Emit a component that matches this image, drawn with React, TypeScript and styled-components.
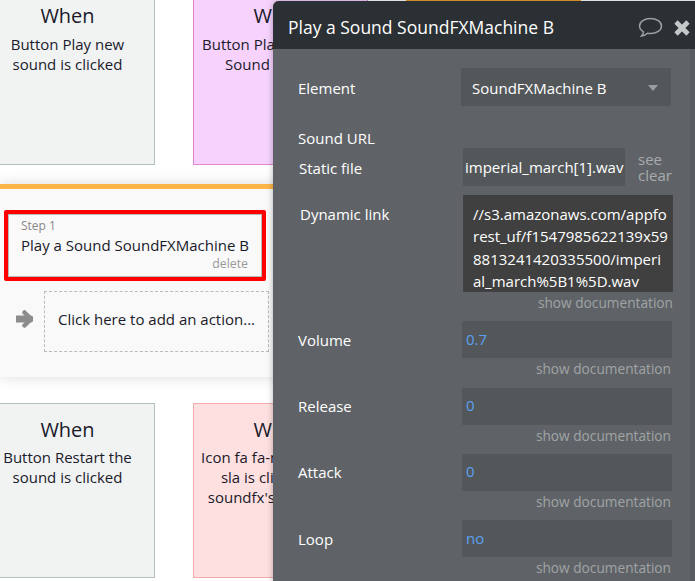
import React from 'react';
import styled, { createGlobalStyle } from 'styled-components';

const GlobalStyle = createGlobalStyle`
  html, body {
    margin: 0;
    padding: 0;
    background: #fff;
    overflow: hidden;
  }
  body {
    font-family: "Open Sans", "Noto Sans", sans-serif;
  }
`;

const Page = styled.div`
  position: relative;
  width: 695px;
  height: 581px;
  overflow: hidden;
  background: #fff;
`;

const CardRow = styled.div<{ $top: number; $height: number }>`
  display: flex;
  gap: 37px;
  margin-left: -20px;
  margin-top: ${p => p.$top}px;
  height: ${p => p.$height}px;
  align-items: flex-end;
`;

const Card = styled.div<{ $bg: string; $line: string; $pad: number }>`
  flex: none;
  width: 175px;
  height: 175px;
  box-sizing: border-box;
  background: ${p => p.$bg};
  border: 1px solid ${p => p.$line};
  padding: ${p => p.$pad}px 0 0;
  text-align: center;
  color: #1a1a2a;

  & + & {
    margin-left: 1px;
  }
`;

const CardTitle = styled.div<{ $gap: number }>`
  font-size: 20px;
  line-height: 27px;
  margin-bottom: ${p => p.$gap}px;
`;

const CardText = styled.div`
  font-size: 15px;
  line-height: 20px;
  white-space: pre-line;
`;

const Band = styled.div`
  margin-top: 19px;
  height: 193px;
  box-sizing: border-box;
  border-top: 5px solid #ffb547;
  background: #f9f9f9;
  box-shadow: 0 0 14px rgba(0, 0, 0, 0.14);
  padding: 21px 0 0 4px;
`;

const StepBox = styled.div`
  width: 262px;
  height: 71px;
  box-sizing: border-box;
  border: 4px solid #f00;
  border-radius: 2px;
  background: #f9f9f9;
  outline: 1px solid #b4bcbc;
  outline-offset: -5px;
  padding: 4px 14px 0 13px;
`;

const StepLabel = styled.div`
  font-size: 12px;
  line-height: 16px;
  color: #888;
`;

const StepName = styled.div`
  font-size: 15px;
  line-height: 20px;
  margin-top: 1px;
  color: #1a1a2a;
  white-space: nowrap;
`;

const StepDelete = styled.div`
  font-size: 12.3px;
  line-height: 16px;
  margin-top: 1px;
  color: #999;
  text-align: right;
`;

const AddRow = styled.div`
  display: flex;
  align-items: center;
  margin-top: 10px;
  margin-left: 12px;
  gap: 11px;
`;

const ArrowSlot = styled.div`
  display: flex;
  margin-top: -5px;
`;

const AddBox = styled.div`
  width: 225px;
  height: 61px;
  box-sizing: border-box;
  border: 1px dashed #bbb;
  padding: 0 0 6px 13px;
  display: flex;
  align-items: center;
  font-size: 15px;
  color: #1a1a2a;
  white-space: nowrap;
`;

const Palette = styled.div`
  position: absolute;
  left: 273px;
  top: 1px;
  width: 430px;
  height: 600px;
  border-radius: 6px 6px 0 0;
  background: #5f6367;
  box-shadow: 0 0 6px rgba(0, 0, 0, 0.3);
`;

const ScrollTrack = styled.div`
  position: absolute;
  left: 417px;
  top: 48px;
  bottom: 0;
  width: 13px;
  background: #585c60;
`;

const PaletteHeader = styled.div`
  height: 48px;
  box-sizing: border-box;
  background: #2a3033;
  border-radius: 6px 6px 0 0;
  display: flex;
  align-items: center;
  padding: 4px 0 0 15px;
  color: #fff;
  font-size: 17.5px;
`;

const HeaderTitle = styled.div`
  flex: 1;
  white-space: nowrap;
`;

const HeaderIcons = styled.div`
  display: flex;
  align-items: center;
  gap: 11px;
  width: 57px;
  margin-right: 8px;
  margin-top: 1px;
`;

const Body = styled.div`
  position: relative;
  padding: 0 0 0 25px;
  color: #fff;
  font-size: 15px;
  width: 400px;
  box-sizing: border-box;
`;

const Row = styled.div<{ $top: number; $label: number }>`
  display: grid;
  grid-template-columns: ${p => p.$label}px 210px;
  align-items: center;
  margin-top: ${p => p.$top}px;
`;

const FieldLabel = styled.div<{ $drop?: number }>`
  line-height: 20px;
  padding-top: ${p => p.$drop ?? 0}px;
`;

const SelectBox = styled.div`
  height: 38px;
  box-sizing: border-box;
  background: #53575a;
  border-radius: 1px;
  display: flex;
  align-items: center;
  justify-content: space-between;
  padding: 2px 13px 0 11px;
`;

const Caret = styled.div`
  width: 0;
  height: 0;
  border-left: 5.5px solid transparent;
  border-right: 5.5px solid transparent;
  border-top: 6px solid #9a9ea1;
`;

const Heading = styled.div`
  margin-top: 22px;
  line-height: 20px;
`;

const FileRow = styled.div`
  display: grid;
  grid-template-columns: 164px 162px auto;
  align-items: center;
  margin-left: 1px;
`;

const FileName = styled.div`
  height: 38px;
  background: #53575a;
  border-radius: 1px;
  display: flex;
  align-items: center;
  padding-left: 2px;
  white-space: nowrap;
  overflow: hidden;
`;

const FileLinks = styled.div`
  margin-left: 13px;
  font-size: 15px;
  line-height: 16px;
  color: #a8abad;
`;

const DynamicRow = styled.div`
  display: grid;
  grid-template-columns: 163px 210px;
  align-items: start;
  margin-top: 9px;
  margin-left: 2px;
`;

const DynamicLabel = styled.div`
  line-height: 20px;
  padding-top: 9px;
`;

const DynamicBox = styled.div`
  height: 97px;
  box-sizing: border-box;
  background: #404040;
  border-radius: 1px;
  padding: 8px 0 0 10px;
  line-height: 22.3px;
  overflow: hidden;
`;

const UrlLine = styled.div`
  white-space: nowrap;
`;

const Doc = styled.div<{ $width: number }>`
  width: ${p => p.$width}px;
  text-align: right;
  color: #a0a3a5;
  font-size: 13.7px;
  line-height: 20px;
  margin-top: 1px;
`;

const ValueBox = styled.div`
  height: 37px;
  box-sizing: border-box;
  background: #53575a;
  border-radius: 1px;
  display: flex;
  align-items: center;
  padding: 0 0 2px 4px;
  color: #5aa0f0;
`;

const fields = [
  { label: 'Volume', value: '0.7' },
  { label: 'Release', value: '0' },
  { label: 'Attack', value: '0' },
  { label: 'Loop', value: 'no' },
];

const urlLines = [
  '//s3.amazonaws.com/appfo',
  'rest_uf/f1547985622139x59',
  '8813241420335500/imperi',
  'al_march%5B1%5D.wav',
];

export default function App() {
  return (
    <Page>
      <GlobalStyle />
      <CardRow $top={0} $height={165}>
        <Card $bg="#f1f3f3" $line="#b4bfbf" $pad={11}>
          <CardTitle $gap={5}>When</CardTitle>
          <CardText>{'Button Play new\nsound is clicked'}</CardText>
        </Card>
        <Card $bg="#f6d2fd" $line="#de88d4" $pad={11}>
          <CardTitle $gap={5}>When</CardTitle>
          <CardText>{'Button Play Previous 1\nSound is clicked'}</CardText>
        </Card>
        <Card $bg="#f0a030" $line="#f0a030" $pad={11} />
      </CardRow>
      <Band>
        <StepBox>
          <StepLabel>Step 1</StepLabel>
          <StepName>Play a Sound SoundFXMachine B</StepName>
          <StepDelete>delete</StepDelete>
        </StepBox>
        <AddRow>
          <ArrowSlot>
            <svg width="17" height="18" viewBox="0 0 17 18">
              <path d="M0.5 9H14" stroke="#8c8c8c" strokeWidth="7" strokeLinecap="round" fill="none" />
              <path d="M8.5 2.5L15 9l-6.5 6.5" stroke="#8c8c8c" strokeWidth="4.5" strokeLinecap="round" strokeLinejoin="round" fill="none" />
            </svg>
          </ArrowSlot>
          <AddBox>Click here to add an action...</AddBox>
        </AddRow>
      </Band>
      <CardRow $top={26} $height={175}>
        <Card $bg="#f1f3f3" $line="#b4bfbf" $pad={12}>
          <CardTitle $gap={4}>When</CardTitle>
          <CardText>{'Button Restart the\nsound is clicked'}</CardText>
        </Card>
        <Card $bg="#ffe0e0" $line="#f0aaaa" $pad={12}>
          <CardTitle $gap={4}>When</CardTitle>
          <CardText>{"Icon fa fa-microphone-\nsla is clicked now\nsoundfx's sound end"}</CardText>
        </Card>
      </CardRow>
      <Palette>
        <ScrollTrack />
        <PaletteHeader>
          <HeaderTitle>Play a Sound SoundFXMachine B</HeaderTitle>
          <HeaderIcons>
            <svg width="25" height="21" viewBox="0 0 25 21">
              <path d="M12.5 1.5C6.5 1.5 1.5 4.8 1.5 9c0 2.4 1.6 4.4 4 5.8-.2 1.6-1 3.2-2 4.2 2.4-.3 4.6-1.4 6-2.8 1 .2 2 .3 3 .3 6 0 11-3.3 11-7.5s-5-7.5-11-7.5z" fill="none" stroke="#9a9fa1" strokeWidth="1.5" />
            </svg>
            <svg width="16" height="16" viewBox="0 0 16 16">
              <path d="M2 2l12 12M14 2L2 14" stroke="#c4c8c8" strokeWidth="4.6" strokeLinecap="butt" />
            </svg>
          </HeaderIcons>
        </PaletteHeader>
        <Body>
          <Row $top={19} $label={163}>
            <FieldLabel $drop={2}>Element</FieldLabel>
            <SelectBox>
              SoundFXMachine B
              <Caret />
            </SelectBox>
          </Row>
          <Heading>Sound URL</Heading>
          <FileRow>
            <FieldLabel $drop={2}>Static file</FieldLabel>
            <FileName>imperial_march[1].wav</FileName>
            <FileLinks>
              see
              <br />
              clear
            </FileLinks>
          </FileRow>
          <DynamicRow>
            <DynamicLabel>Dynamic link</DynamicLabel>
            <DynamicBox>
              {urlLines.map(line => (
                <UrlLine key={line}>{line}</UrlLine>
              ))}
            </DynamicBox>
          </DynamicRow>
          <Doc $width={375}>show documentation</Doc>
          {fields.map(f => (
            <React.Fragment key={f.label}>
              <Row $top={8.33} $label={164}>
                <FieldLabel>{f.label}</FieldLabel>
                <ValueBox>{f.value}</ValueBox>
              </Row>
              <Doc $width={373}>show documentation</Doc>
            </React.Fragment>
          ))}
        </Body>
      </Palette>
    </Page>
  );
}
